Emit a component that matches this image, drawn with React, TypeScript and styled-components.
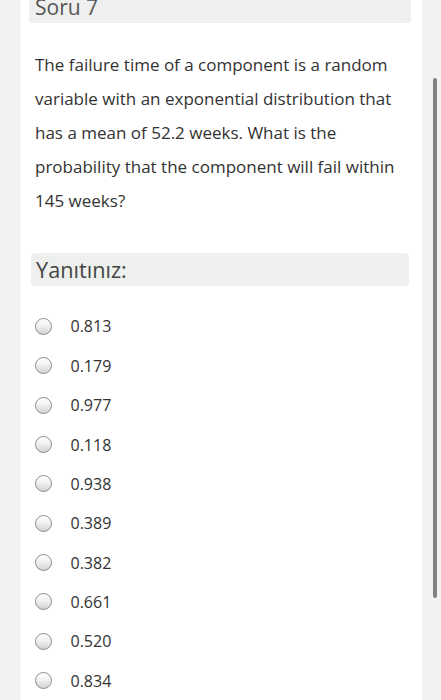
import React from 'react'
import styled, { createGlobalStyle } from 'styled-components'

const GlobalStyle = createGlobalStyle`
  html, body {
    margin: 0;
    padding: 0;
    background-color: #f2f2f2;
    font-family: 'Open Sans', 'Liberation Sans', sans-serif;
  }
`

const Page = styled.div`
  display: flex;
  height: 700px;
  overflow: hidden;
`

const LeftGutter = styled.div`
  width: 19px;
  flex-shrink: 0;
`

const Panel = styled.div`
  width: 403px;
  flex-shrink: 0;
  box-sizing: border-box;
  padding: 0 11px 0 9px;
  background-color: #ffffff;
  border-left: solid 1px #ebebeb;
`

const RightGutter = styled.div`
  flex-grow: 1;
  padding: 78px 0 0 11px;
`

const ScrollThumb = styled.div`
  width: 4px;
  height: 520px;
  border-radius: 2px;
  background-color: #828282;
`

const QuestionHeader = styled.div`
  height: 23px;
  padding-left: 6px;
  background-color: #efefef;
  border-radius: 0 0 4px 4px;
  font-size: 21px;
  line-height: 15px;
  color: #555555;
`

const QuestionText = styled.p`
  margin: 24.5px 0 0 0;
  padding: 0 4px 0 6px;
  font-size: 17px;
  line-height: 34px;
  color: #333333;
`

const AnswerHeader = styled.div`
  margin: 35px 2px 0 2px;
  height: 33px;
  padding-left: 5px;
  background-color: #eef0ee;
  border-radius: 3px;
  font-size: 21.7px;
  line-height: 33px;
  color: #444444;
`

const OptionList = styled.div`
  display: flex;
  flex-direction: column;
  margin-top: 21.3px;
  padding-left: 6px;
`

const OptionRow = styled.label`
  display: flex;
  align-items: center;
  gap: 18.5px;
  height: 39.35px;
`

const Radio = styled.span`
  display: block;
  box-sizing: border-box;
  width: 17px;
  height: 17px;
  border-radius: 50%;
  border: solid 1px #8c8c8c;
  background: linear-gradient(180deg, #ffffff 0%, #f1f1f1 45%, #d2d2d2 100%);
`

const OptionText = styled.span`
  font-size: 16px;
  color: #333333;
`

const options = ['0.813', '0.179', '0.977', '0.118', '0.938', '0.389', '0.382', '0.661', '0.520', '0.834']

const App: React.FC = () => {
  return (
    <>
      <GlobalStyle />
      <Page>
        <LeftGutter />
        <Panel>
          <QuestionHeader>Soru 7</QuestionHeader>
          <QuestionText>
            The failure time of a component is a random variable with an exponential distribution that has a mean of
            52.2 weeks. What is the probability that the component will fail within 145 weeks?
          </QuestionText>
          <AnswerHeader>Yanıtınız:</AnswerHeader>
          <OptionList>
            {options.map((o) => (
              <OptionRow key={o}>
                <Radio />
                <OptionText>{o}</OptionText>
              </OptionRow>
            ))}
          </OptionList>
        </Panel>
        <RightGutter>
          <ScrollThumb />
        </RightGutter>
      </Page>
    </>
  )
}

export default App
